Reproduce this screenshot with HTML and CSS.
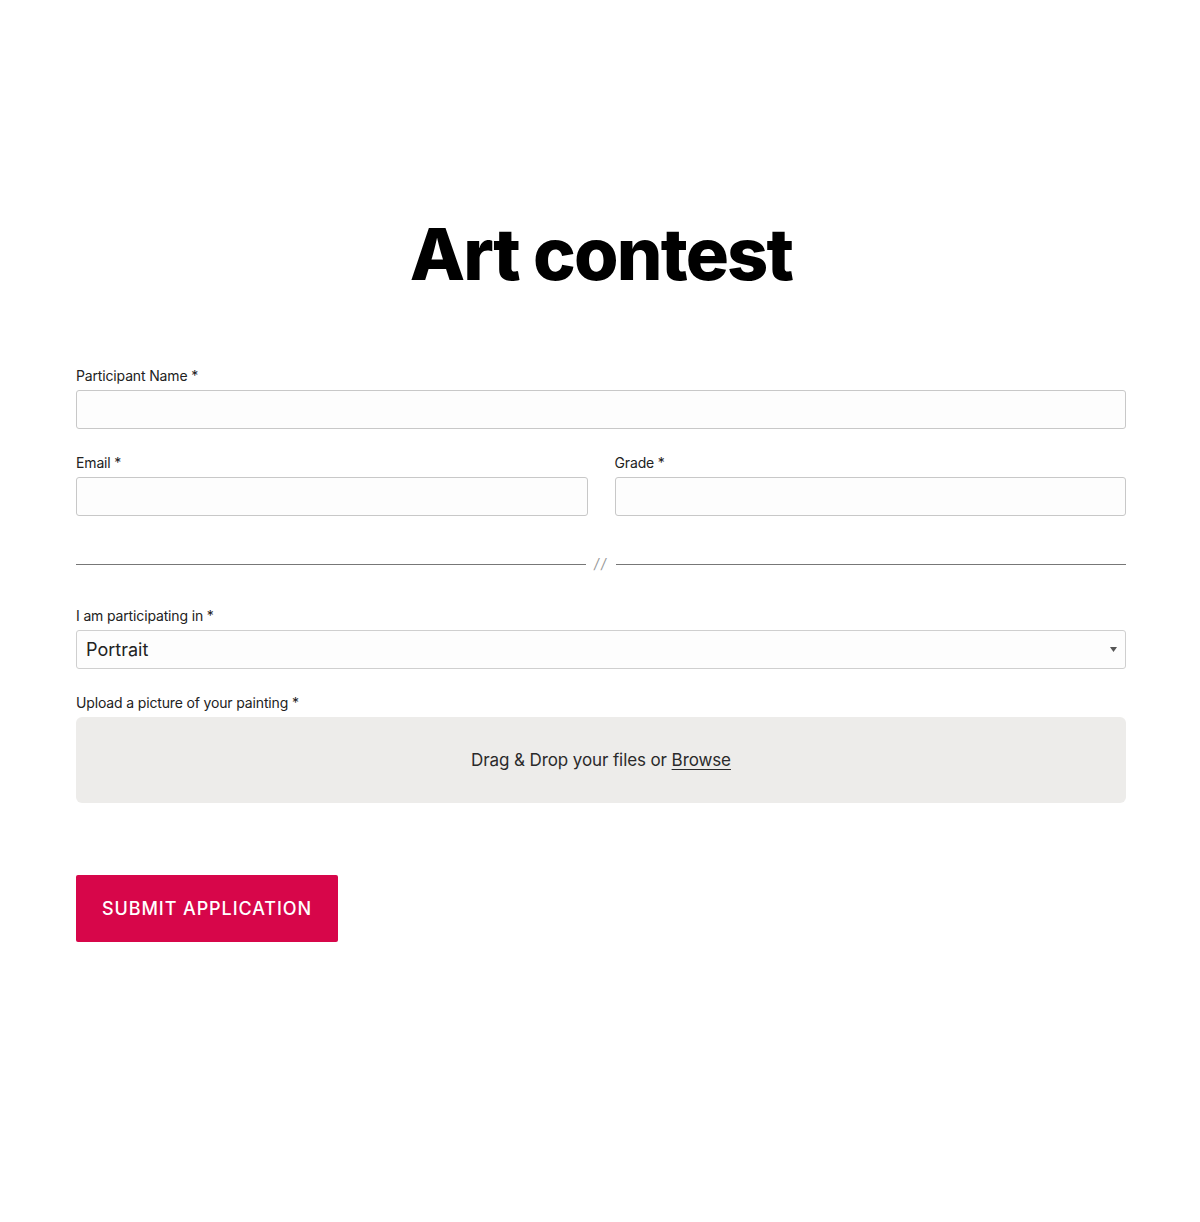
FILE: index.html
```html
<!DOCTYPE html>
<html lang="en">
<head>
<meta charset="utf-8">
<title>Art contest</title>
<link rel="stylesheet" href="styles.css">
</head>
<body>
<main class="page">
  <h1 class="title">Art contest</h1>
  <form class="form">
    <div class="field">
      <label class="label">Participant Name *</label>
      <input class="input" type="text">
    </div>
    <div class="row">
      <div class="field">
        <label class="label">Email *</label>
        <input class="input" type="text">
      </div>
      <div class="field">
        <label class="label">Grade *</label>
        <input class="input" type="text">
      </div>
    </div>
    <div class="divider">
      <span class="divider-line"></span>
      <span class="divider-mark">//</span>
      <span class="divider-line"></span>
    </div>
    <div class="field">
      <label class="label">I am participating in *</label>
      <div class="select">
        <span class="select-value">Portrait</span>
        <svg class="select-arrow" width="7" height="5" viewBox="0 0 7 5"><path d="M0 0H7L3.5 5Z" fill="#555"/></svg>
      </div>
    </div>
    <div class="field">
      <label class="label">Upload a picture of your painting *</label>
      <div class="dropzone">Drag &amp; Drop your files or <span class="browse">Browse</span></div>
    </div>
    <div class="actions">
      <button class="submit" type="button">SUBMIT APPLICATION</button>
    </div>
  </form>
</main>
</body>
</html>
```
FILE: styles.css
```css
* { box-sizing: border-box; }
html, body { margin: 0; padding: 0; background: #fff; }
body {
  font-family: Inter, "Noto Sans", sans-serif;
  color: #222;
}
.page {
  width: 1050px;
  margin-left: 76px;
  padding-top: 218px;
}
.title {
  margin: 0;
  text-align: center;
  font-size: 72px;
  line-height: 72px;
  font-weight: 800;
  letter-spacing: -0.025em;
  color: #000;
}
.form {
  margin-top: 74px;
  display: flex;
  flex-direction: column;
}
.field {
  display: flex;
  flex-direction: column;
  margin-bottom: 22px;
}
.row {
  display: grid;
  grid-template-columns: 1fr 1fr;
  column-gap: 27px;
}
.label {
  font-size: 14px;
  line-height: 20px;
  padding-top: 2px;
  margin-bottom: 4px;
  color: #222;
  letter-spacing: -0.15px;
}
.input {
  height: 39px;
  border: 1px solid #c8c8c8;
  border-radius: 3px;
  background: #fdfdfd;
  font: inherit;
  padding: 0 10px;
}
.divider {
  display: flex;
  align-items: center;
  gap: 8px;
  margin-top: 18px;
  margin-bottom: 32px;
}
.divider-line {
  flex: 1;
  height: 1px;
  background: #777;
}
.divider-mark {
  font-size: 14px;
  line-height: 16px;
  color: #999;
  font-style: italic;
  letter-spacing: 2px;
}
.select {
  height: 39px;
  border: 1px solid #cfcfcf;
  border-radius: 3px;
  background: #fdfdfd;
  display: flex;
  align-items: center;
  justify-content: space-between;
  padding: 0 8px 0 9px;
}
.select-value {
  font-size: 18px;
  color: #222;
}
.dropzone {
  height: 86px;
  border-radius: 6px;
  background: #edecea;
  display: flex;
  align-items: center;
  justify-content: center;
  font-size: 17px;
  color: #2a2a2a;
  white-space: pre;
  letter-spacing: -0.1px;
}
.browse {
  text-decoration: underline;
  text-underline-offset: 3px;
}
.actions {
  margin-top: 50px;
}
.submit {
  width: 262px;
  height: 67px;
  border: none;
  border-radius: 2px;
  background: #d7064a;
  color: #fff;
  font-family: Inter, "Noto Sans", sans-serif;
  font-size: 18px;
  font-weight: 500;
  letter-spacing: 0.9px;
  cursor: pointer;
}
```
